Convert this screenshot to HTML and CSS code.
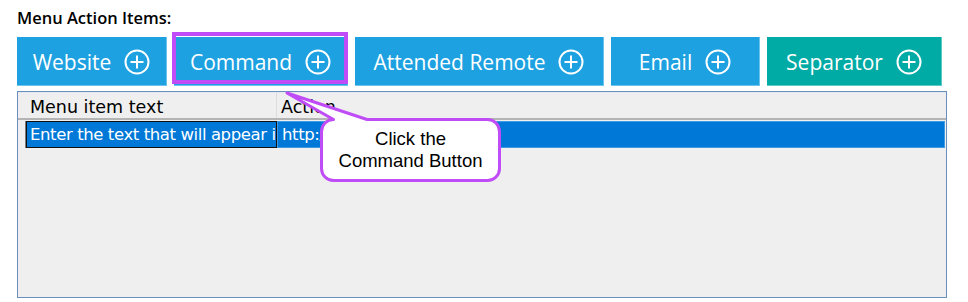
FILE: index.html
```html
<!DOCTYPE html>
<html lang="en">
<head>
    <meta charset="UTF-8">
    <title>Menu Action Items</title>
    <link rel="stylesheet" href="styles.css">
</head>
<body>
    <div class="page">
        <div class="section-label">Menu Action Items:</div>

        <!-- Action buttons -->
        <div class="action-bar">
            <button class="action-btn w-website">Website <span class="plus"><svg viewBox="0 0 26 26"><circle cx="13" cy="13" r="11.5"/><path d="M13 6.5v13M6.5 13h13"/></svg></span></button>
            <button class="action-btn w-command">Command <span class="plus"><svg viewBox="0 0 26 26"><circle cx="13" cy="13" r="11.5"/><path d="M13 6.5v13M6.5 13h13"/></svg></span><span class="highlight"></span></button>
            <button class="action-btn w-remote">Attended Remote <span class="plus"><svg viewBox="0 0 26 26"><circle cx="13" cy="13" r="11.5"/><path d="M13 6.5v13M6.5 13h13"/></svg></span></button>
            <button class="action-btn w-email">Email <span class="plus"><svg viewBox="0 0 26 26"><circle cx="13" cy="13" r="11.5"/><path d="M13 6.5v13M6.5 13h13"/></svg></span></button>
            <button class="action-btn separator w-separator">Separator <span class="plus"><svg viewBox="0 0 26 26"><circle cx="13" cy="13" r="11.5"/><path d="M13 6.5v13M6.5 13h13"/></svg></span></button>
        </div>

        <!-- Items grid -->
        <div class="grid">
            <div class="grid-row grid-head">
                <div class="row-head"></div>
                <div class="cell col-text">Menu item text</div>
                <div class="cell col-action">Action</div>
            </div>
            <div class="grid-row grid-selected">
                <div class="row-head"></div>
                <div class="cell col-text current">Enter the text that will appear in the menu</div>
                <div class="cell col-action">http://</div>
            </div>
        </div>

        <!-- Callout -->
        <div class="callout">
            <svg class="callout-shape" width="230" height="100" viewBox="-50 -30 230 100">
                <path d="M13.5 1.5 L-33 -25 L47 1.5 H167.5 A12 12 0 0 1 179.5 13.5 V50.5 A12 12 0 0 1 167.5 62.5 H13.5 A12 12 0 0 1 1.5 50.5 V13.5 A12 12 0 0 1 13.5 1.5 Z"/>
            </svg>
            <div class="callout-text">Click the<br>Command Button</div>
        </div>
    </div>
</body>
</html>
```

FILE: styles.css
```css
:root {
    --btn-blue: #1ea1e1;
    --btn-teal: #00aaa5;
    --select: #0078d7;
    --purple: #bf4cf6;
}

* {
    margin: 0;
    padding: 0;
    box-sizing: border-box;
}

body {
    background: #ffffff;
    font-family: 'Open Sans', sans-serif;
}

.page {
    position: relative;
    width: 968px;
    height: 302px;
    padding: 8px 0 0 17px;
}

.section-label {
    font-size: 16.5px;
    font-weight: 600;
    line-height: 20px;
    color: #000;
}

/* Buttons */
.action-bar {
    display: flex;
    gap: 7px;
    margin-top: 9px;
}

.action-btn {
    position: relative;
    height: 49px;
    display: flex;
    align-items: center;
    justify-content: center;
    gap: 13px;
    border: none;
    border-right: 1px solid #6cc3ee;
    border-bottom: 1px solid #6cc3ee;
    background: var(--btn-blue);
    color: #fff;
    font-family: 'Open Sans', sans-serif;
    font-size: 21px;
    padding-top: 2px;
    cursor: pointer;
}

.action-btn.separator {
    background: var(--btn-teal);
    border-color: #5ccbc6;
}

.w-website { width: 150px; }
.w-command { width: 174px; }
.w-remote { width: 249px; }
.w-email { width: 149px; }
.w-separator { width: 175px; }

.plus svg {
    display: block;
    width: 26px;
    height: 26px;
    fill: none;
    stroke: #fff;
    stroke-width: 2;
}

.highlight {
    position: absolute;
    left: -2px;
    right: -1px;
    top: -5px;
    bottom: 1px;
    border: 4px solid var(--purple);
    pointer-events: none;
}

/* Grid */
.grid {
    width: 930px;
    height: 207px;
    margin-top: 5px;
    border: 1px solid #6a8fbd;
    background: #efefef;
    font-family: 'DejaVu Sans', sans-serif;
    font-size: 17.5px;
}

.grid-row {
    display: flex;
}

.grid-head {
    height: 28px;
    border-bottom: 2px solid #b4b4b4;
    border-top: 1px solid #e3e7ee;
}

.row-head {
    width: 8px;
    flex: none;
}

.cell {
    white-space: nowrap;
    overflow: hidden;
    padding: 1px 4px 0;
    line-height: 26px;
}

.col-text {
    width: 251px;
    flex: none;
}

.col-action {
    flex: 1;
}

.grid-head .col-text {
    border-right: 1px solid #dcdcdc;
}

.grid-selected {
    height: 27px;
    margin-top: 1px;
}

.grid-selected .row-head {
    border-right: 1px solid #7a7a7a;
}

.grid-selected .cell {
    background: var(--select);
    color: #fff;
    font-size: 16.5px;
    letter-spacing: -0.4px;
    line-height: 24px;
}

.grid-selected .current {
    border: 1px solid #111;
    padding-left: 3px;
}

.grid-selected .col-action {
    border: 1px solid #3f9be4;
    margin-right: 1px;
}

/* Callout */
.callout {
    position: absolute;
    left: 320px;
    top: 118px;
    width: 181px;
    height: 64px;
}

.callout-shape {
    position: absolute;
    left: -50px;
    top: -30px;
    overflow: visible;
}

.callout-shape path {
    fill: #fff;
    stroke: var(--purple);
    stroke-width: 3;
    stroke-linejoin: round;
}

.callout-text {
    position: relative;
    height: 100%;
    display: flex;
    align-items: center;
    justify-content: center;
    text-align: center;
    font-family: 'Liberation Sans', Arial, sans-serif;
    font-size: 18.5px;
    line-height: 22px;
    color: #000;
}
```
